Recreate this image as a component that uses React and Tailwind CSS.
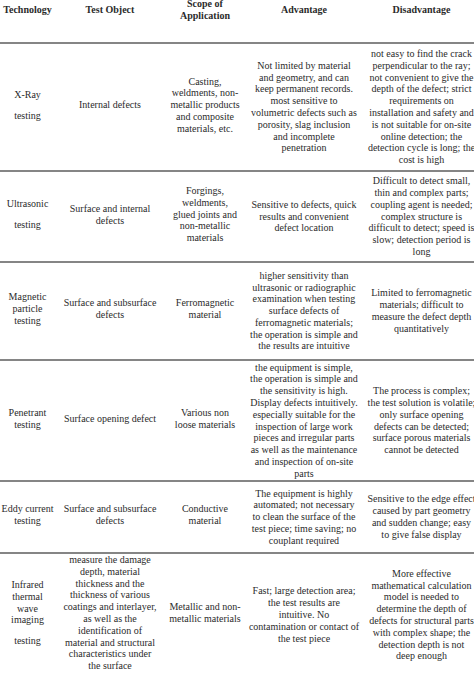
const header = [['Technology'], ['Test Object'], ['Scope of', 'Application'], ['Advantage'], ['Disadvantage']];

const rows = [
  {
    h: 'h-[128px]',
    tech: [['X-Ray'], ['testing']],
    obj: ['Internal defects'],
    scope: ['Casting,', 'weldments, non-', 'metallic products', 'and composite', 'materials, etc.'],
    adv: ['Not limited by material', 'and geometry, and can', 'keep permanent records.', 'most sensitive to', 'volumetric defects such as', 'porosity, slag inclusion', 'and incomplete', 'penetration'],
    dis: ['not easy to find the crack', 'perpendicular to the ray;', 'not convenient to give the', 'depth of the defect; strict', 'requirements on', 'installation and safety and', 'is not suitable for on-site', 'online detection; the', 'detection cycle is long; the', 'cost is high'],
  },
  {
    h: 'h-[91px]',
    tech: [['Ultrasonic'], ['testing']],
    obj: ['Surface and internal', 'defects'],
    scope: ['Forgings,', 'weldments,', 'glued joints and', 'non-metallic', 'materials'],
    adv: ['Sensitive to defects, quick', 'results and convenient', 'defect location'],
    dis: ['Difficult to detect small,', 'thin and complex parts;', 'coupling agent is needed;', 'complex structure is', 'difficult to detect; speed is', 'slow; detection period is', 'long'],
  },
  {
    h: 'h-[98px]',
    tech: [['Magnetic', 'particle', 'testing']],
    obj: ['Surface and subsurface', 'defects'],
    scope: ['Ferromagnetic', 'material'],
    adv: ['higher sensitivity than', 'ultrasonic or radiographic', 'examination when testing', 'surface defects of', 'ferromagnetic materials;', 'the operation is simple and', 'the results are intuitive'],
    dis: ['Limited to ferromagnetic', 'materials; difficult to', 'measure the defect depth', 'quantitatively'],
  },
  {
    h: 'h-[121px]',
    tech: [['Penetrant', 'testing']],
    obj: ['Surface opening defect'],
    scope: ['Various non', 'loose materials'],
    adv: ['the equipment is simple,', 'the operation is simple and', 'the sensitivity is high.', 'Display defects intuitively.', 'especially suitable for the', 'inspection of large work', 'pieces and irregular parts', 'as well as the maintenance', 'and inspection of on-site', 'parts'],
    dis: ['The process is complex;', 'the test solution is volatile;', 'only surface opening', 'defects can be detected;', 'surface porous materials', 'cannot be detected'],
  },
  {
    h: 'h-[72px]',
    tech: [['Eddy current', 'testing']],
    obj: ['Surface and subsurface', 'defects'],
    scope: ['Conductive', 'material'],
    adv: ['The equipment is highly', 'automated; not necessary', 'to clean the surface of the', 'test piece; time saving; no', 'couplant required'],
    dis: ['Sensitive to the edge effect', 'caused by part geometry', 'and sudden change; easy', 'to give false display'],
  },
  {
    h: 'h-[122px]',
    tech: [['Infrared', 'thermal', 'wave', 'imaging'], ['testing']],
    obj: ['measure the damage', 'depth, material', 'thickness and the', 'thickness of various', 'coatings and interlayer,', 'as well as the', 'identification of', 'material and structural', 'characteristics under', 'the surface'],
    scope: ['Metallic and non-', 'metallic materials'],
    adv: ['Fast; large detection area;', 'the test results are', 'intuitive. No', 'contamination or contact of', 'the test piece'],
    dis: ['More effective', 'mathematical calculation', 'model is needed to', 'determine the depth of', 'defects for structural parts', 'with complex shape; the', 'detection depth is not', 'deep enough'],
  },
];

function Lines({ lines }) {
  return (
    <div className="flex flex-col items-center whitespace-nowrap text-center">
      {lines.map((l, i) => (
        <span key={i}>{l}</span>
      ))}
    </div>
  );
}

const cols = 'grid grid-cols-[55px_110px_80px_118px_117px]';

export default function App() {
  return (
    <div className="h-[673px] w-[474px] overflow-hidden bg-white text-[10px] leading-[11.8px] text-[#2b2b2b]" style={{ fontFamily: '"Liberation Serif", "Times New Roman", serif' }}>
      <div className="w-[480px]">
        <div className={`${cols} h-[44px] border-b-2 border-[#858585] font-bold`}>
          {header.map((c, i) => (
            <div key={i} className="flex h-[20px] items-center justify-center">
              <Lines lines={c} />
            </div>
          ))}
        </div>

        {rows.map((r, i) => (
          <div key={i} className={`${cols} ${r.h} border-b-2 border-[#858585]`}>
            <div className="flex flex-col items-center justify-center gap-[9px] pb-1">
              {r.tech.map((p, j) => (
                <Lines key={j} lines={p} />
              ))}
            </div>
            <div className="flex items-center justify-center pb-1">
              <Lines lines={r.obj} />
            </div>
            <div className="flex items-center justify-center pb-1">
              <Lines lines={r.scope} />
            </div>
            <div className="flex items-center justify-center">
              <Lines lines={r.adv} />
            </div>
            <div className="flex items-center justify-center">
              <Lines lines={r.dis} />
            </div>
          </div>
        ))}
      </div>
    </div>
  );
}
